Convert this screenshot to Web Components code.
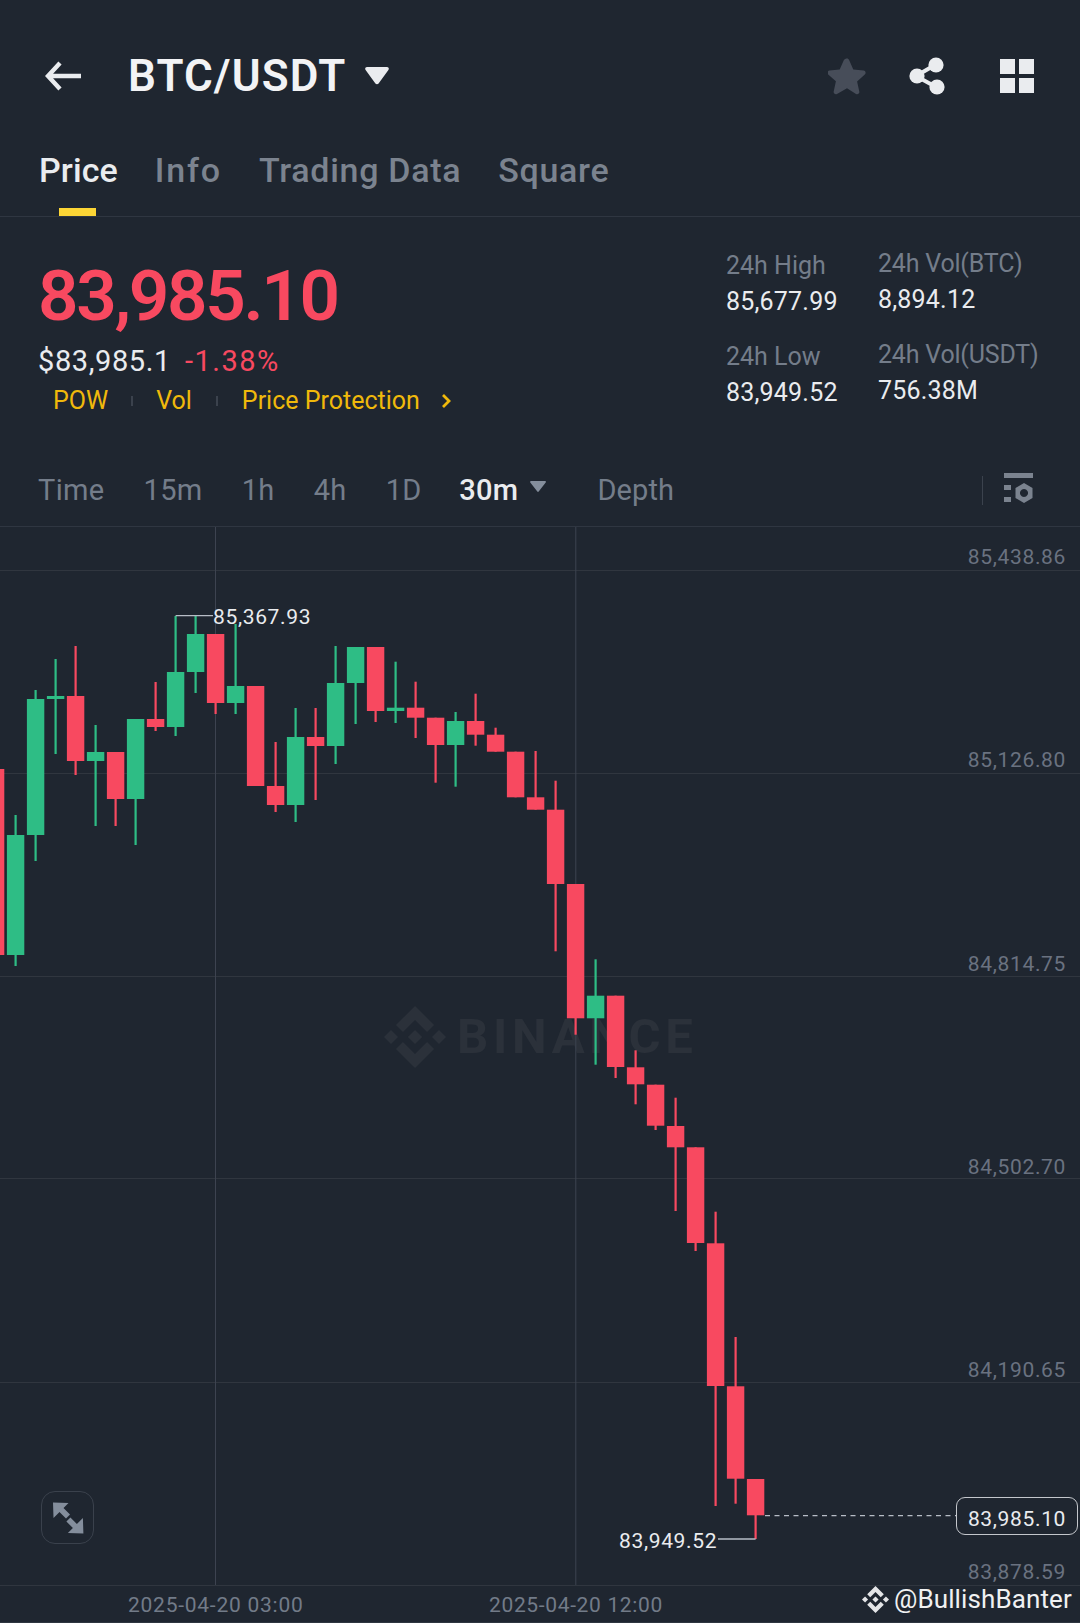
<!DOCTYPE html>
<html lang="en"><head><meta charset="utf-8"><title>BTC/USDT</title>
<style>
html,body{margin:0;padding:0;background:#1f2630}
body{width:1080px;height:1623px;overflow:hidden;font-family:Roboto,"Liberation Sans",sans-serif;color:#eaecef;display:flex;flex-direction:column}
</style></head><body>
<app-header></app-header>
<tab-bar></tab-bar>
<price-panel></price-panel>
<interval-bar></interval-bar>
<candle-chart></candle-chart>
<script>
const LOGO='<path d="M38.73 53.2l24.59-24.58 24.6 24.6 14.3-14.31L63.32 0 24.42 38.9l14.31 14.3z"/><path d="M0 63.31l14.3-14.31 14.31 14.31-14.31 14.3z"/><path d="M38.73 73.41l24.59 24.59 24.6-24.6 14.31 14.29-38.9 38.91-38.91-38.88-.02-.02 14.33-14.29z"/><path d="M98 63.31l14.3-14.31 14.31 14.3-14.31 14.32z"/><path d="M77.83 63.3L63.32 48.78 52.59 59.51l-1.24 1.23-2.54 2.54 14.51 14.5 14.51-14.47z"/>';
function def(name,html){customElements.define(name,class extends HTMLElement{constructor(){super();this.attachShadow({mode:'open'}).innerHTML=typeof html==='function'?html(this):html;}});}

def('app-header',`<style>
:host{display:flex;align-items:center;height:152px;padding-left:45px;box-sizing:border-box;flex:none}
.back{width:37px;height:30px;display:block}
h1{margin:0 0 0 46px;font:600 44px/50px Roboto,sans-serif;letter-spacing:1.1px;color:#f2f3f5}
.caret{margin:-1px 0 0 19px;width:24px;height:18px;display:block}
.icons{margin-left:auto;display:flex;align-items:center;padding-right:46px}
.star{width:38px;height:38px;display:block;margin-top:0}
.share{width:38px;height:38px;display:block;margin-left:42px;margin-top:-1px}
.apps{width:34px;height:34px;display:block;margin-left:54px;margin-top:-1px}
</style>
<svg class="back" viewBox="45 61 37 30"><path d="M60 63 48 76l12 13M48 76h33" fill="none" stroke="#eaecef" stroke-width="4.4"/></svg>
<h1>BTC/USDT</h1>
<svg class="caret" viewBox="0 0 24 18"><path d="M2 0h20c1.6 0 2.4 1.8 1.4 3L13.6 16.4c-.8 1-2.4 1-3.2 0L.6 3C-.4 1.8.4 0 2 0z" fill="#eaecef"/></svg>
<div class="icons">
<svg class="star" viewBox="0 0 38 38"><path d="M19 1.5c1 0 1.7.6 2.1 1.5l4.2 9.6 10.3 1c2 .2 2.7 2.6 1.2 3.9l-7.7 6.9 2.2 10.2c.4 2-1.6 3.4-3.3 2.4L19 31.2 9 36.9c-1.7 1-3.7-.5-3.3-2.4l2.2-10.2L.2 17.5c-1.5-1.3-.7-3.7 1.2-3.9l10.3-1L15.900 3c.4-.9 2.100-1.500 3.100-1.500z" fill="#474d59"/></svg>
<svg class="share" viewBox="0 0 38 38"><path d="M27 8 8 19l20 11" fill="none" stroke="#eaecef" stroke-width="4"/><circle cx="28" cy="8" r="7.600" fill="#eaecef"/><circle cx="9" cy="19" r="7.600" fill="#eaecef"/><circle cx="29" cy="30" r="7.600" fill="#eaecef"/></svg>
<svg class="apps" viewBox="0 0 34 34" fill="#eaecef"><rect width="15" height="15"/><rect x="19" width="15" height="15"/><rect y="19" width="15" height="15"/><rect x="19" y="19" width="15" height="15"/></svg>
</div>`);

def('tab-bar',`<style>
:host{display:flex;height:65px;padding-left:39px;gap:37px;box-sizing:border-box;border-bottom:1px solid #2f3641;flex:none;font:500 34px/36px Roboto,sans-serif;letter-spacing:.7px;color:#7b838f;position:relative}
span{display:block}
.on{color:#eaecef;letter-spacing:.1px}
.i{letter-spacing:1.8px}
.bar{position:absolute;left:59px;top:56px;width:37px;height:8px;background:#fcd535}
</style><span class="on">Price</span><span class="i">Info</span><span>Trading Data</span><span>Square</span><i class="bar"></i>`);

def('stat-cell',(el)=>`<style>
:host{display:flex;flex-direction:column;gap:6px;font:400 25px/30px Roboto,sans-serif}
.l{color:#747d8a;white-space:nowrap;letter-spacing:var(--label-ls,0)}
.v{color:#eaecef;white-space:nowrap;letter-spacing:.2px}
</style><div class="l">${el.getAttribute('label')}</div><div class="v">${el.getAttribute('value')}</div>`);

def('price-panel',`<style>
:host{display:grid;grid-template-columns:726px 152px 1fr;height:223px;box-sizing:border-box;flex:none}
.left{padding:44px 0 0 38px}
.big{font:600 71px/70px Roboto,sans-serif;color:#f84960;letter-spacing:-2.350px;white-space:nowrap}
.sub{margin-top:15px;display:flex;font:400 29px/30px Roboto,sans-serif;letter-spacing:.6px}
.sub span{width:147px}
.sub b{font-weight:400;color:#f84960;letter-spacing:1.5px}
.tags{margin-top:10px;padding-left:15px;display:flex;align-items:center;font:400 25px/30px Roboto,sans-serif;color:#f0b90b}
.sep{width:2px;height:10px;background:#3b424d;margin:0 24px}
.s1{margin:0 23px}
.chev{width:10px;height:14px;margin-left:21px;display:block}
.col{display:flex;flex-direction:column;gap:24.5px;padding-top:34px}
.c2{padding-top:32px;--label-ls:-.2px}
</style>
<div class="left">
<div class="big">83,985.10</div>
<div class="sub"><span>$83,985.1</span><b>-1.38%</b></div>
<div class="tags"><span>POW</span><i class="sep s1"></i><span>Vol</span><i class="sep"></i><span>Price Protection</span>
<svg class="chev" viewBox="0 0 10 14"><path d="M2 1l6 6-6 6" fill="none" stroke="#f0b90b" stroke-width="2.800"/></svg></div>
</div>
<div class="col"><stat-cell label="24h High" value="85,677.99"></stat-cell><stat-cell label="24h Low" value="83,949.52"></stat-cell></div>
<div class="col c2"><stat-cell label="24h Vol(BTC)" value="8,894.12"></stat-cell><stat-cell label="24h Vol(USDT)" value="756.38M"></stat-cell></div>`);

def('interval-bar',`<style>
:host{display:flex;align-items:center;height:87px;box-sizing:border-box;padding:14px 46px 0 38px;border-bottom:1px solid #2f3641;flex:none;font:400 29px/36px Roboto,sans-serif;letter-spacing:.35px;color:#747d8a}
span{margin-right:39px;white-space:nowrap}
.l{margin-right:37.500px}
.on{color:#eaecef;font-weight:500;margin-right:12px}
.tri{width:16px;height:11px;display:block;margin:-8px 51px 0 0}
.dp{margin:0;letter-spacing:.1px}
.div{width:1px;height:29px;background:#3b424d;margin-left:auto;margin-right:21px}
.ic{width:30px;height:30px;display:block;margin-top:-4px}
</style><span>Time</span><span>15m</span><span>1h</span><span>4h</span><span class="l">1D</span><span class="on">30m</span>
<svg class="tri" viewBox="0 0 16 11"><path d="M1 0h14c.8 0 1.200.9.700 1.500L8.700 10.500c-.4.500-1 .500-1.400 0L.3 1.500C-.2.900.2 0 1 0z" fill="#848e9c"/></svg>
<span class="dp">Depth</span><i class="div"></i>
<svg class="ic" viewBox="0 0 30 30" fill="#7b838f"><rect width="29" height="5"/><rect y="12" width="7" height="5"/><rect y="24" width="7" height="5"/><path fill-rule="evenodd" d="M20 10l8.500 5v10L20 30l-8.500-5V15zM20 16a4 4 0 1 0 .01 0z"/></svg>`);

const C=[
['r',-4.4,769,955,769,955],
['g',15.6,815,966,835,955],['g',35.6,690,861,699,835],['g',55.6,659,754,696,699],['r',75.6,646,775,696,761],
['g',95.6,725,826,752,761],['r',115.6,752,826,752,799],['g',135.6,719,845,719,799],['r',155.6,682,731,719,727],
['g',175.6,616,736,672,727],['g',195.6,616,693,634,672],['r',215.6,634,714,634,703],['g',235.6,624,714,686,703],
['r',255.6,686,786,686,786],['r',275.6,742,812,786,805],['g',295.6,708,822,737,805],['r',315.6,708,800,737,746],
['g',335.6,646,764,683,746],['g',355.6,647,724,647,683],['r',375.6,647,722,647,711],['g',395.6,661.7,723,707.7,711],
['r',415.6,681.7,738,707.7,717.7],['r',435.6,717.7,782.7,717.7,745],['g',455.6,712,786.7,721,745],['r',475.6,693.7,745.7,721,734.7],
['r',495.6,727.7,751.7,734.7,751.7],['r',515.6,751.7,797.3,751.7,797.3],['r',535.6,751,809.7,797.3,809.7],['r',555.6,780.7,951.3,809.7,884],
['r',575.6,884,1034.7,884,1018.3],['g',595.6,959.3,1064.7,995.7,1018.3],['r',615.6,995.7,1078,995.7,1067],['r',635.6,1050.3,1104.3,1067.3,1084.3],
['r',655.6,1084.7,1130,1084.7,1125.7],['r',675.6,1097.7,1211,1126,1147.3],['r',695.6,1147.3,1251,1147.3,1243],['r',715.6,1211.7,1506,1243.3,1386],
['r',735.6,1337,1503.7,1386.3,1478.7],['r',755.6,1479,1539,1479,1515.3]];
const COL={r:'#f84960',g:'#2ebd85'};
const candles=C.map(([c,x,wt,wb,bt,bb])=>`<rect x="${x-1.1}" y="${wt}" width="2.2" height="${wb-wt}" fill="${COL[c]}"/><rect x="${x-8.7}" y="${bt}" width="17.4" height="${bb-bt}" fill="${COL[c]}"/>`).join('');
const gridY=[570,773,976,1178,1382,1585];
const axis=[['85,438.86',557],['85,126.80',760],['84,814.75',964],['84,502.70',1167],['84,190.65',1370],['83,878.59',1572]];
const T=y=>y-527-15;

def('candle-chart',`<style>
:host{display:block;position:relative;height:1096px;flex:none;overflow:hidden;font:400 21px/30px Roboto,sans-serif;letter-spacing:.65px}
svg.plot{position:absolute;left:0;top:0;width:1080px;height:1096px;display:block}
span{position:absolute;white-space:nowrap}
.ax{right:14px;color:#6a7280}
.date{color:#727b88}
.mk{color:#eaecef}
.pill{left:956px;top:969.500px;width:122px;height:38px;box-sizing:border-box;border:1.500px solid #c4c7cc;border-radius:9px;color:#eaecef;text-align:center;line-height:43px}
.wm{position:absolute;left:384px;top:479px;display:flex;align-items:center;gap:11px;color:#2b313a;font:700 49px/62px Roboto,sans-serif;letter-spacing:4.700px}
.wm svg{width:62px;height:62px;display:block;fill:#2b313a}
.expand{position:absolute;left:41px;top:964px;width:53px;height:53px;box-sizing:border-box;border:1.500px solid #3a414c;border-radius:14px;display:block}
.expand svg{display:block;position:absolute;left:0;top:0}
.tag{position:absolute;left:862px;top:1057px;display:flex;align-items:center;gap:5px;font:400 26px/30px Roboto,sans-serif;letter-spacing:.1px;color:#f0f1f2}
.tag svg{width:27px;height:27px;display:block;fill:#e4e5e7}
</style>
<div class="wm"><svg viewBox="0 0 126.61 126.61">${LOGO}</svg><b style="font-weight:700">BINANCE</b></div>
<svg class="plot" viewBox="0 527 1080 1096">
${gridY.map(y=>`<rect x="0" y="${y}" width="1080" height="1" fill="#30363f"/>`).join('')}
<rect x="215" y="527" width="1" height="1058" fill="#3d4350"/><rect x="575.300" y="527" width="1" height="1058" fill="#3d4350"/>
<rect x="0" y="1622" width="1080" height="1" fill="#2f3641"/>
${candles}
<path d="M175.600 615.700H213M718 1539h37.600" fill="none" stroke="#b7bdc6" stroke-width="1.300"/>
<path d="M765 1515.700H956" fill="none" stroke="#b7bdc6" stroke-width="1.300" stroke-dasharray="5 4.500"/>
</svg>
${axis.map(([t,y])=>`<span class="ax" style="top:${T(y)}px">${t}</span>`).join('')}
<span class="date" style="left:128px;top:${T(1605)}px;letter-spacing:.75px">2025-04-20 03:00</span>
<span class="date" style="left:489px;top:${T(1605)}px">2025-04-20 12:00</span>
<span class="mk" style="left:213px;top:${T(617)}px">85,367.93</span>
<span class="mk" style="left:619px;top:${T(1541)}px">83,949.52</span>
<span class="pill">83,985.10</span>
<div class="expand"><svg width="50" height="50" viewBox="41 1491.500 50 50" fill="#848e9c"><path d="M52 1502l15.500.5-5 5 6.500 6.500-4 4-6.500-6.500-6 6zM82.400 1533l-15.500-.5 5-5-6.500-6.500 4-4 6.500 6.500 6-6z"/></svg></div>
<div class="tag"><svg viewBox="0 0 126.61 126.61">${LOGO}</svg><span style="position:static">@BullishBanter</span></div>`);
</script>
</body></html>
